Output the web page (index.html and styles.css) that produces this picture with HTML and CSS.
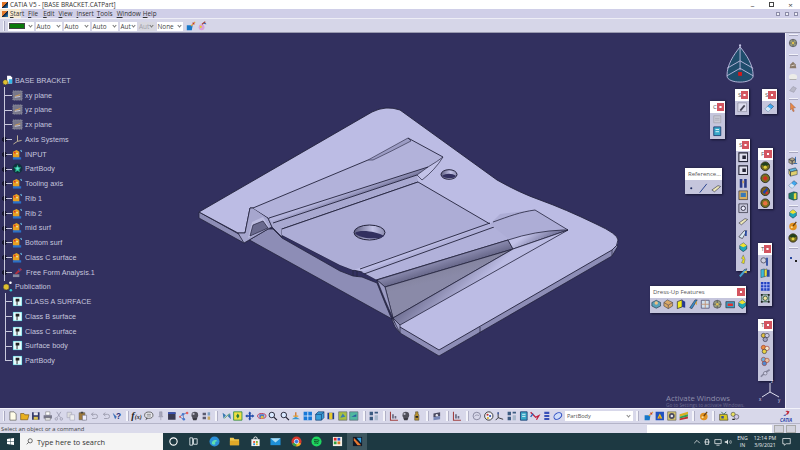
FILE: index.html
```html
<!DOCTYPE html>
<html lang="en">
<head>
<meta charset="utf-8">
<title>CATIA V5 - [BASE BRACKET.CATPart]</title>
<link rel="stylesheet" href="styles.css">
</head>
<body>
<svg class="sprites" aria-hidden="true">
<defs>
<linearGradient id="gOuter" x1="393" y1="318" x2="420" y2="345" gradientUnits="userSpaceOnUse"><stop offset="0" stop-color="#6f6f92"/><stop offset="1" stop-color="#bcbce4"/></linearGradient>
<linearGradient id="gFace" x1="440" y1="250" x2="447" y2="278" gradientUnits="userSpaceOnUse"><stop offset="0" stop-color="#5f5f82"/><stop offset=".6" stop-color="#84849f"/><stop offset="1" stop-color="#8a8aa8"/></linearGradient>
<linearGradient id="gMid" x1="440" y1="248" x2="446" y2="268" gradientUnits="userSpaceOnUse"><stop offset="0" stop-color="#b6b6de"/><stop offset="1" stop-color="#6a6a8c"/></linearGradient>
<linearGradient id="gTip" x1="530" y1="232" x2="540" y2="246" gradientUnits="userSpaceOnUse"><stop offset="0" stop-color="#c2c2e8"/><stop offset="1" stop-color="#73739a"/></linearGradient>
<linearGradient id="gChan" x1="340" y1="195" x2="343" y2="203" gradientUnits="userSpaceOnUse"><stop offset="0" stop-color="#b4b4dc"/><stop offset="1" stop-color="#6e6e94"/></linearGradient>
<linearGradient id="gHole" x1="0" y1="0" x2="1" y2="0"><stop offset="0" stop-color="#5e5e80"/><stop offset=".6" stop-color="#c2c2e6"/><stop offset="1" stop-color="#8c8cb0"/></linearGradient>
<symbol id="doc" viewBox="0 0 12 12"><path d="M2.500 1h5l2.500 2.500V11h-7.500z" fill="#fffde8" stroke="#555" stroke-width=".8"/></symbol>
<symbol id="folder" viewBox="0 0 12 12"><path d="M1 3h4l1 1.500h5l-1.500 6H1z" fill="#e8b020" stroke="#6a4a10" stroke-width=".7"/></symbol>
<symbol id="save" viewBox="0 0 12 12"><path d="M1.500 1.500h9v9h-9z" fill="#2f3566"/><path d="M3.500 1.500h5v3.500h-5z" fill="#e8e8f0"/><path d="M3.500 7h5v3.500h-5z" fill="#d8c050"/></symbol>
<symbol id="print" viewBox="0 0 12 12"><path d="M3.500 1h5v4h-5z" fill="#fff" stroke="#666" stroke-width=".6"/><path d="M1 5h10v4H1z" fill="#77778a"/><path d="M3 8h6v3H3z" fill="#e8e8e8" stroke="#555" stroke-width=".5"/></symbol>
<symbol id="cut" viewBox="0 0 12 12"><path d="M3.500 1L8 8M8.500 1L4 8" stroke="#9a9ab0" fill="none"/><circle cx="3" cy="9.500" r="1.500" fill="none" stroke="#9a9ab0"/><circle cx="9" cy="9.500" r="1.500" fill="none" stroke="#9a9ab0"/></symbol>
<symbol id="copy" viewBox="0 0 12 12"><path d="M1.500 1.500h5.500v6.500h-5.500z" fill="#ddd" stroke="#a2a2b6" stroke-width=".7"/><path d="M5 4.500h5.500v6.500h-5.500z" fill="#eee" stroke="#a2a2b6" stroke-width=".7"/></symbol>
<symbol id="paste" viewBox="0 0 12 12"><path d="M1.500 2h7v8.500h-7z" fill="#a07a3a" stroke="#555" stroke-width=".6"/><path d="M3.500 1h3v2h-3z" fill="#444"/><path d="M5.500 5h5v6h-5z" fill="#eef" stroke="#556" stroke-width=".6"/></symbol>
<symbol id="undo" viewBox="0 0 12 12"><path d="M3 4h5a2.500 2.500 0 010 5H4M3 4l2.500-2M3 4l2.500 2" stroke="#a2a2b4" fill="none" stroke-width="1.200"/></symbol>
<symbol id="help" viewBox="0 0 12 12"><path d="M1 2l3 8 2-3" fill="#3f70b8"/><text x="5" y="9.500" font-size="10" font-weight="700" font-family="Liberation Sans" fill="#27307a">?</text></symbol>
<symbol id="bubble" viewBox="0 0 12 12"><ellipse cx="6" cy="5" rx="5" ry="3.800" fill="#e8e8ee" stroke="#444" stroke-width=".9"/><path d="M3 8l-1 3 3-2" fill="#555"/><path d="M3.500 4h5M3.500 6h5" stroke="#555" stroke-width=".7"/></symbol>
<symbol id="pin" viewBox="0 0 12 12"><path d="M4.500 1h3v4.500l1 1.500h-5l1-1.500zM6 7v4" fill="#a8a8bc" stroke="#8e8ea2" stroke-width=".6"/></symbol>
<symbol id="bottle" viewBox="0 0 12 12"><path d="M4.500 1h3v2l1 2v6h-5V5l1-2z" fill="#b89030" stroke="#443" stroke-width=".6"/><path d="M4.500 6h3v2h-3z" fill="#222"/></symbol>
<symbol id="dark" viewBox="0 0 12 12"><path d="M1.500 1.500h9v9h-9z" fill="#3a3a52"/><path d="M1.500 1.500h9v2h-9z" fill="#3850b0"/></symbol>
<symbol id="tree" viewBox="0 0 12 12"><path d="M1 7l4-3 5-2M5 4l1 6M1 7l5 3" stroke="#5878b8" fill="none"/><circle cx="10" cy="2.500" r="1.500" fill="#e06060"/><circle cx="5" cy="4" r="1.500" fill="#4878d0"/><circle cx="1.500" cy="7" r="1.200" fill="#e06060"/><circle cx="6" cy="10" r="1.500" fill="#4878d0"/></symbol>
<symbol id="blob" viewBox="0 0 12 12"><circle cx="6" cy="5" r="4" fill="#50505c"/><circle cx="4.500" cy="3.500" r="1.300" fill="#b8b8c8"/><path d="M3 8.500h6L8 11H4z" fill="#3a3a44"/></symbol>
<symbol id="split" viewBox="0 0 12 12"><path d="M1 2h4v3H1zM1 7h4v3H1z" fill="#5a5a70"/><path d="M7 1.500h3v4H7z" fill="#7ea0c0"/><path d="M7 6.500h3v4H7z" fill="#c8a860"/></symbol>
<symbol id="fly" viewBox="0 0 12 12"><path d="M1 2l4 3-3 4zM11 10L7 6l3-3z" fill="#3a7ab0"/><path d="M3 9l6-6" stroke="#48a050"/></symbol>
<symbol id="fit" viewBox="0 0 12 12"><path d="M1 1h10v10H1z" fill="#f0e040" stroke="#2a8a4a"/><path d="M6 3l-2 3 2 3 2-3z" fill="#2a7a3a"/></symbol>
<symbol id="pan" viewBox="0 0 12 12"><path d="M6 .5l2 2.500H7v2h2V4l2.500 2L9 8V7H7v2h1l-2 2.500L4 9h1V7H3v1L.5 6 3 4v1h2V3H4z" fill="#1f4aa8"/></symbol>
<symbol id="rot" viewBox="0 0 12 12"><ellipse cx="6" cy="6" rx="5" ry="3" fill="none" stroke="#c04060" stroke-width="1.200"/><path d="M3 4h6v4H3z" fill="#5078c0"/><path d="M5 6h3v3H5z" fill="#e0c040"/></symbol>
<symbol id="zoomp" viewBox="0 0 12 12"><circle cx="4.800" cy="4.800" r="3.300" fill="#d8e8ff" stroke="#223" stroke-width="1.100"/><path d="M7.300 7.300l3.700 3.700" stroke="#223" stroke-width="1.500"/></symbol>
<symbol id="normal" viewBox="0 0 12 12"><path d="M1 10l5-3 5 3z" fill="#3898d0"/><path d="M6 7V1.500" stroke="#d07020" stroke-width="1.500"/><path d="M3 6h6" stroke="#e0a030" stroke-width="1.500"/></symbol>
<symbol id="quad" viewBox="0 0 12 12"><path d="M1 1h10v10H1z" fill="#1878d8"/><path d="M6 1v10M1 6h10" stroke="#e8f0ff" stroke-width="1"/></symbol>
<symbol id="cube" viewBox="0 0 12 12"><path d="M1 4l3-3h7v7l-3 3H1z" fill="#3aa0d8" stroke="#163a70" stroke-width=".8"/><path d="M1 4h7v7M8 4l3-3" stroke="#163a70" fill="none" stroke-width=".8"/></symbol>
<symbol id="can" viewBox="0 0 12 12"><path d="M2 2h8v8H2z" fill="#1f3a90"/><path d="M4 2h4v8H4z" fill="#e8c830"/></symbol>
<symbol id="persp" viewBox="0 0 12 12"><path d="M1 1h10v10H1z" fill="#a8c040" stroke="#667" stroke-width=".8"/><path d="M3 8l3-5 3 4z" fill="#3a7ab0"/></symbol>
<symbol id="screen" viewBox="0 0 12 12"><path d="M1 1h10v10H1z" fill="#50b8a0" stroke="#667" stroke-width=".8"/><path d="M3 7l6-3v3z" fill="#2a5aa0"/></symbol>
<symbol id="book" viewBox="0 0 12 12"><path d="M2 3l8-1.500V6L2 7.500z" fill="#4a4a60"/><path d="M2 7.500l8-1.500v4l-8 1z" fill="#7888b8"/><circle cx="6" cy="5" r="1.400" fill="#e8e8f0"/></symbol>
<symbol id="scale" viewBox="0 0 12 12"><path d="M2 1v10h9" fill="none" stroke="#a04040" stroke-width="1.300"/><path d="M4 4h2v5H4zM7 6h2v3H7z" fill="#6a6a80"/></symbol>
<symbol id="swirl" viewBox="0 0 12 12"><circle cx="6" cy="6" r="4.500" fill="none" stroke="#8c8ca4" stroke-width="1.200"/><path d="M3.500 6.500c1-2 3-2 5-1" stroke="#8c8ca4" fill="none"/></symbol>
<symbol id="ball" viewBox="0 0 12 12"><circle cx="6" cy="6" r="5" fill="#f0f0f4" stroke="#333" stroke-width="1.100"/><circle cx="4.500" cy="4.500" r="1.300" fill="#c03030"/><circle cx="7.500" cy="6" r="1.300" fill="#2a50b0"/><circle cx="5" cy="8.300" r="1.200" fill="#d8b020"/></symbol>
<symbol id="axis" viewBox="0 0 12 12"><path d="M4 1.500V8l6 2M4 8l-3 3" stroke="#222" fill="none"/><path d="M4 1.500V4" stroke="#2a50b0" stroke-width="1.200"/></symbol>
<symbol id="axistree" viewBox="0 0 12 12"><path d="M6 1.500V8L10.500 7M6 8L1.500 11" stroke="#d8c8a0" fill="none" stroke-width=".9"/></symbol>
<symbol id="bars" viewBox="0 0 12 12"><path d="M1 1h4v4H1zM7 1h4v2H7zM1 7h4v4H1z" fill="#3a5a80"/><path d="M7 5h4v6H7z" fill="#a8b8cc"/></symbol>
<symbol id="block" viewBox="0 0 12 12"><path d="M2 1h8v10H2z" fill="#38a8c8" stroke="#1a3a70"/><path d="M4 4h4M4 6.500h4" stroke="#e8f8ff"/></symbol>
<symbol id="redx" viewBox="0 0 12 12"><path d="M1 1.500l6 6 4-2-3 5" stroke="#c02040" fill="none" stroke-width="1.500"/><path d="M1 7l3-4" stroke="#2060b8" stroke-width="1.500"/></symbol>
<symbol id="stack" viewBox="0 0 12 12"><path d="M3 1h6v2.500H3zM3 4.700h6v2.500H3zM3 8.400h6v2.500H3z" fill="#3850b8"/></symbol>
<symbol id="link" viewBox="0 0 12 12"><ellipse cx="6" cy="6" rx="5" ry="3.500" transform="rotate(-35 6 6)" fill="#cfdcf8" stroke="#2848c0" stroke-width="1.100"/></symbol>
<symbol id="brush" viewBox="0 0 12 12"><path d="M1 5h7l-1 6H1z" fill="#1878c8"/><path d="M6 6l5-5" stroke="#e0a040" stroke-width="1.400"/><path d="M8 2l2 2" stroke="#c03030" stroke-width="1.400"/></symbol>
<symbol id="pot" viewBox="0 0 12 12"><circle cx="5.500" cy="7.500" r="3.500" fill="#d8a0d8"/><circle cx="4.500" cy="7" r="1.300" fill="#e8d020"/><path d="M6 4l4-3" stroke="#b04030" stroke-width="1.500"/><path d="M8 2.500l3 1" stroke="#2860b0" stroke-width="1.200"/></symbol>
<symbol id="rainbow" viewBox="0 0 12 12"><path d="M1 1h10v10H1z" fill="#2050c0"/><path d="M3 9l3-6 3 6z" fill="#e8c820"/><path d="M5 9l1-3 1 3z" fill="#d03040"/></symbol>
<symbol id="wheel" viewBox="0 0 12 12"><path d="M1 1h10v10H1z" fill="#d8c870" stroke="#555" stroke-width=".7"/><circle cx="6" cy="6" r="3.500" fill="#4a4a60"/><circle cx="6" cy="6" r="1.500" fill="#e8e8f0"/></symbol>
<symbol id="layers" viewBox="0 0 12 12"><path d="M1 4l10-3v3L1 7z" fill="#d8b020"/><path d="M1 7l10-3v2.500L1 9z" fill="#30a050"/><path d="M1 9l10-2.500V9L1 11z" fill="#c03030"/></symbol>
<symbol id="apple" viewBox="0 0 12 12"><circle cx="6" cy="6.500" r="4.500" fill="#e09020"/><path d="M6 6L10 1" stroke="#6a4010" stroke-width="1.500"/><circle cx="4.500" cy="7.500" r="1.300" fill="#f8e0a0"/></symbol>
<symbol id="yel1" viewBox="0 0 12 12"><path d="M1 4h9l1 7H1z" fill="#d8c820" stroke="#333" stroke-width=".7"/><path d="M3 6h3v3H3z" fill="#385098"/><path d="M3 1l3 3 3-3" stroke="#2a6a4a" fill="none"/></symbol>
<symbol id="yel2" viewBox="0 0 12 12"><circle cx="4" cy="4" r="2.500" fill="#e8e060" stroke="#444" stroke-width=".7"/><circle cx="8" cy="7" r="2.800" fill="#d0c8e8" stroke="#444" stroke-width=".7"/><path d="M3 10h3" stroke="#222" stroke-width="1.500"/></symbol>
<symbol id="feat" viewBox="0 0 12 12"><path d="M1 4l4-3 6 3v4l-5 3-5-3z" fill="#d8a868" stroke="#333" stroke-width=".6"/><path d="M1 4l5 3 5-3M6 7v4" stroke="#335" fill="none" stroke-width=".6"/></symbol>
<symbol id="edge" viewBox="0 0 12 12"><path d="M1 4l5-2.500L11 4v4l-5 2.500L1 8z" fill="#58a0b8" stroke="#234" stroke-width=".7"/><circle cx="6" cy="4.500" r="2" fill="#f0c080"/></symbol>
<symbol id="shell" viewBox="0 0 12 12"><path d="M1.500 3L7 1v8l-5.500 2z" fill="#f0e820" stroke="#223" stroke-width=".8"/><path d="M7 1l3.500 2v7L7 9z" fill="#283890"/></symbol>
<symbol id="slant" viewBox="0 0 12 12"><path d="M2 10L8 1h2.500l-6 10z" fill="#3a8cc8" stroke="#223" stroke-width=".6"/><path d="M8 5l2-3v5z" fill="#d8a030"/></symbol>
<symbol id="win" viewBox="0 0 12 12"><path d="M1.500 1.500h9v9h-9z" fill="#cfe0ee" stroke="#446" stroke-width=".8"/><path d="M1.500 6h9M6 1.500v9" stroke="#c09070"/></symbol>
<symbol id="gear" viewBox="0 0 12 12"><circle cx="6" cy="6" r="4.500" fill="#9aa080" stroke="#445" stroke-width=".7"/><path d="M1.500 6h9M6 1.500v9" stroke="#445" stroke-width=".8"/><circle cx="6" cy="6" r="1.500" fill="#e0c050"/></symbol>
<symbol id="tray" viewBox="0 0 12 12"><path d="M1 3h10v7H1z" fill="#3a9ec0" stroke="#223" stroke-width=".7"/><path d="M3 5h6v3H3z" fill="#e03030"/></symbol>
<symbol id="arc" viewBox="0 0 12 12"><path d="M2 10h8l-1-5-3-3-3 3z" fill="#8a7a6a"/><path d="M4 7l4-1" stroke="#e8e0d8"/></symbol>
<symbol id="cloud" viewBox="0 0 12 12"><ellipse cx="6" cy="6" rx="5" ry="3.500" fill="#ecece8"/><path d="M2 9h8" stroke="#a4a4a4"/></symbol>
<symbol id="grey" viewBox="0 0 12 12"><path d="M2 8l4-5 4 2-3 5z" fill="#b8b8c8" stroke="#9a9aa8" stroke-width=".7"/></symbol>
<symbol id="greybox" viewBox="0 0 12 12"><path d="M2 2h8v8H2z" fill="#c8c8d4" stroke="#a0a0ac" stroke-width=".8"/><path d="M3.500 5h5M3.500 7h5" stroke="#a0a0ac" stroke-width=".7"/></symbol>
<symbol id="cursor" viewBox="0 0 12 12"><path d="M3 1l6 6H6l1.500 4-1.500.500L4.500 8 3 9.500z" fill="#e8884a" stroke="#804020" stroke-width=".4"/></symbol>
<symbol id="tool" viewBox="0 0 12 12"><path d="M1 4l4-2 4 2-4 2zM1 4v4l4 2V6zM9 4v4l-4 2V6z" fill="#b0a888" stroke="#334" stroke-width=".6"/><path d="M9 1v6M7 9h4" stroke="#2060a8"/></symbol>
<symbol id="drum" viewBox="0 0 12 12"><path d="M1 3l8-2 2 3-8 2z" fill="#5ab0d8" stroke="#234" stroke-width=".6"/><path d="M1 3v5l2 3V6zM3 6l8-2v5l-8 2z" fill="#e0d070" stroke="#234" stroke-width=".6"/></symbol>
<symbol id="erase" viewBox="0 0 12 12"><path d="M1 8l6-6 4 3-6 6z" fill="#40a8f0" stroke="#234" stroke-width=".5"/><path d="M1 8l3-3 4 3-3 3z" fill="#d8e8f8"/></symbol>
<symbol id="green" viewBox="0 0 12 12"><path d="M1 3l6-2 4 1v8l-4 1-6-2z" fill="#208068" stroke="#123" stroke-width=".6"/><path d="M7 3l3-.500v7l-3 .500z" fill="#e8d840"/></symbol>
<symbol id="pencil" viewBox="0 0 12 12"><path d="M1 1h10v10H1z" fill="#dde" stroke="#778" stroke-width=".6"/><path d="M3 9l5-6 1.500 1.500-5 6z" fill="#445"/></symbol>
<symbol id="face" viewBox="0 0 12 12"><path d="M1 1h10v10H1z" fill="#e0e0ee" stroke="#223" stroke-width="1.200"/><path d="M5 4h4v4H5z" fill="#223"/></symbol>
<symbol id="tall" viewBox="0 0 12 12"><path d="M2 1h3v10H2zM7 1h3v10H7z" fill="#2a3a88"/><path d="M5 3h2v3H5z" fill="#c8a060"/></symbol>
<symbol id="pic" viewBox="0 0 12 12"><path d="M1 1h10v10H1z" fill="#d8b060" stroke="#334" stroke-width=".8"/><path d="M3 3h6v5H3z" fill="#3878b8"/></symbol>
<symbol id="gem" viewBox="0 0 12 12"><path d="M1 1h10v10H1z" fill="#c8c8dc" stroke="#223" stroke-width=".8"/><circle cx="6" cy="6" r="2.500" fill="#eef" stroke="#223"/></symbol>
<symbol id="wedge" viewBox="0 0 12 12"><path d="M1 8l7-5 3 1-7 6z" fill="#eee8b8" stroke="#334" stroke-width=".7"/></symbol>
<symbol id="wedge2" viewBox="0 0 12 12"><path d="M1 9l6-7h3L5 11z" fill="#d8e8f0" stroke="#334" stroke-width=".8"/><path d="M8 2v6h2V2z" fill="#2848a0"/></symbol>
<symbol id="cubey" viewBox="0 0 12 12"><path d="M2 4l4-3 4 3v4l-4 3-4-3z" fill="#20a8b8" stroke="#123" stroke-width=".6"/><path d="M6 1l4 3-4 2-4-2z" fill="#f0e030"/></symbol>
<symbol id="spark" viewBox="0 0 12 12"><path d="M6 1l2 5-1 5-3-1 2-4-2-1z" fill="#e8e020" stroke="#556" stroke-width=".5"/></symbol>
<symbol id="bluey" viewBox="0 0 12 12"><path d="M1 10l6-7 3-1-1 3-6 7z" fill="#40a0d8" stroke="#334" stroke-width=".6"/><path d="M6 6l4-2v3z" fill="#e8d040"/></symbol>
<symbol id="disc" viewBox="0 0 12 12"><path d="M1 6a5 5 0 1110 0 5 5 0 11-10 0z" fill="#787020" stroke="#111" stroke-width=".8"/><path d="M1 4l5-3 5 3-5 2z" fill="#204020"/><circle cx="6" cy="7" r="1.800" fill="#e0d040"/></symbol>
<symbol id="discr" viewBox="0 0 12 12"><path d="M1 6a5 5 0 1110 0 5 5 0 11-10 0z" fill="#787020" stroke="#111" stroke-width=".8"/><path d="M3 6l3-3 3 3-3 3z" fill="#d03020"/></symbol>
<symbol id="discb" viewBox="0 0 12 12"><path d="M1 6a5 5 0 1110 0 5 5 0 11-10 0z" fill="#786020" stroke="#111" stroke-width=".8"/><path d="M3 7l5-5 1 2-4 5z" fill="#2040b0"/><circle cx="8" cy="8" r="1.500" fill="#d03030"/></symbol>
<symbol id="disco" viewBox="0 0 12 12"><path d="M1 6a5 5 0 1110 0 5 5 0 11-10 0z" fill="#787020" stroke="#111" stroke-width=".8"/><circle cx="6" cy="6" r="2.500" fill="#e87040"/></symbol>
<symbol id="sk1" viewBox="0 0 12 12"><circle cx="4" cy="5" r="3" fill="#d0d0e0" stroke="#556"/><path d="M8 2v9" stroke="#2848a0" stroke-width="2"/></symbol>
<symbol id="sk2" viewBox="0 0 12 12"><path d="M1 2l4-1v9l-4 1z" fill="#40b8d8" stroke="#234" stroke-width=".5"/><path d="M5 2l3-1v8l-3 1z" fill="#e8e040" stroke="#234" stroke-width=".5"/><path d="M8 2h3v8H8z" fill="#2848a0"/></symbol>
<symbol id="sk3" viewBox="0 0 12 12"><path d="M1 1h10v10H1z" fill="#2040c0"/><path d="M4.300 1v10M7.700 1v10M1 4.300h10M1 7.700h10" stroke="#c8d0ff" stroke-width=".8"/></symbol>
<symbol id="sk4" viewBox="0 0 12 12"><path d="M2 2h8v8H2z" fill="none" stroke="#2a5a3a"/><circle cx="6" cy="6" r="2.500" fill="#f0e0a0" stroke="#2a5a3a"/><path d="M1 1h2v2H1zM9 1h2v2H9zM1 9h2v2H1zM9 9h2v2H9z" fill="#222"/></symbol>
<symbol id="mol" viewBox="0 0 12 12"><circle cx="4" cy="4" r="2.500" fill="#e0c040" stroke="#334" stroke-width=".7"/><circle cx="8" cy="4" r="2.500" fill="#c8c8e0" stroke="#334" stroke-width=".7"/><circle cx="6" cy="8.500" r="2.500" fill="#a0a0c0" stroke="#334" stroke-width=".7"/></symbol>
<symbol id="molo" viewBox="0 0 12 12"><circle cx="4" cy="4" r="2.500" fill="#e89040" stroke="#a03020" stroke-width=".7"/><circle cx="8" cy="5" r="2.500" fill="#f0e8d0" stroke="#a03020" stroke-width=".7"/><circle cx="5" cy="8.500" r="2.500" fill="#e8d040" stroke="#334" stroke-width=".7"/></symbol>
<symbol id="molb" viewBox="0 0 12 12"><circle cx="4" cy="4" r="2.500" fill="#70b0e0" stroke="#a04030" stroke-width=".7"/><circle cx="8" cy="5" r="2.500" fill="#e8c0a0" stroke="#a04030" stroke-width=".7"/><circle cx="5" cy="8.500" r="2.500" fill="#5088d0" stroke="#a04030" stroke-width=".7"/></symbol>
<symbol id="molg" viewBox="0 0 12 12"><path d="M1 10l5-5 5-3" stroke="#8888a0" stroke-width="2" fill="none"/><circle cx="6" cy="6" r="2" fill="#d0d0e8" stroke="#556" stroke-width=".6"/></symbol>
<symbol id="plane" viewBox="0 0 12 12"><path d="M1 1h10v10H1z" fill="#77778a"/><path d="M1 1h10v10H1z" fill="none" stroke="#9a9aaa" stroke-dasharray="1 1"/><path d="M3 7l6-2" stroke="#d8a050"/><path d="M3 8l6-1" stroke="#d0d0e0"/></symbol>
<symbol id="geoset" viewBox="0 0 12 12"><path d="M1 3l4-2 3 2v7l-3 1-4-2z" fill="#e8a020"/><circle cx="3" cy="4" r="1" fill="#e03030"/><circle cx="5.500" cy="5" r="1" fill="#f0e0a0"/><path d="M1 9h9v2.500H1z" fill="#2a70c8"/><path d="M9.500 1L10.500 3" stroke="#70c8f0" stroke-width="1.200"/></symbol>
<symbol id="body" viewBox="0 0 12 12"><circle cx="6" cy="6" r="5.500" fill="#123040"/><path d="M6 2l1.200 2.500L10 5 8 7l.5 3L6 8.500 3.500 10 4 7 2 5l2.800-.5z" fill="#28c090"/><circle cx="6" cy="6" r="1.300" fill="#70e0e0"/></symbol>
<symbol id="ffa" viewBox="0 0 12 12"><path d="M1 8h7v3H1z" fill="#8888a0"/><path d="M3 7l6-6 2 2-6 5z" fill="#b03040"/><path d="M7 2l2 2" stroke="#2050c0" stroke-width="1.500"/></symbol>
<symbol id="pub" viewBox="0 0 12 12"><path d="M1 1h10v10H1z" fill="#30c8d8"/><path d="M1.500 1.500h9v9h-9z" fill="#e8fcfc"/><path d="M4 3h4v3H6v4H5V6H4z" fill="#222"/></symbol>
<symbol id="rootp" viewBox="0 0 13 13"><path d="M6 1h4l2 2v7H6z" fill="#fff"/><path d="M8 5h4v5H8z" fill="#30b8e8"/><circle cx="4" cy="8.500" r="3" fill="#e0c030" stroke="#333" stroke-dasharray="1.500 1"/></symbol>
<symbol id="pubroot" viewBox="0 0 13 13"><circle cx="5" cy="7" r="3.500" fill="#e0c030" stroke="#333" stroke-dasharray="1.500 1"/><circle cx="10" cy="2" r="1.500" fill="#fff"/><circle cx="10.500" cy="11" r="1.500" fill="#30c8d8"/></symbol>
<symbol id="catlogo" viewBox="0 0 24 14"><path d="M14 1l-3 .500 3 2-3 3.500 4-1 2-4z" fill="#c02838"/><path d="M8 8l3-2 1 2z" fill="#2840a8"/></symbol>
</defs>
</svg>

<div class="app">
  <header class="titlebar">
    <span class="app-ico"></span>
    <span class="title">CATIA V5 - [BASE BRACKET.CATPart]</span>
    <span class="winbtns"><span class="wb">&#8211;</span><span class="wb wb-max"></span><span class="wb">&#215;</span></span>
  </header>
  <nav class="menubar">
    <span class="m-start"><span class="app-ico"></span><span><u>S</u>tart</span></span>
    <span class="m m-file"><u>F</u>ile</span>
    <span class="m m-edit"><u>E</u>dit</span>
    <span class="m m-view"><u>V</u>iew</span>
    <span class="m m-ins"><u>I</u>nsert</span>
    <span class="m m-tools"><u>T</u>ools</span>
    <span class="m m-win"><u>W</u>indow</span>
    <span class="m m-help"><u>H</u>elp</span>
    <span class="docbtns"><i></i><i></i><i></i></span>
  </nav>
  <div class="propbar">
    <span class="grip"></span>
    <span class="combo c-col"><b class="swatch"></b><em></em></span>
    <span class="combo c-a">Auto<em></em></span>
    <span class="combo c-a">Auto<em></em></span>
    <span class="combo c-a">Auto<em></em></span>
    <span class="combo c-b">Aut<em></em></span>
    <span class="combo c-b off">Aut<em></em></span>
    <span class="combo c-a">None<em></em></span>
    <svg class="pi pi-first"><use href="#brush"/></svg>
    <svg class="pi"><use href="#pot"/></svg>
  </div>

  <div class="workspace">
    <main class="viewport">
      <svg class="part" viewBox="0 33 785 375" aria-label="3D part">
        <path d="M199 212V218L244 243L268 229L273 229L282 238L340 271L353 276L362 277L377 283L385 303L395 327L400 333L439 356L612 256L618 246L600 240L439 345Z" fill="#8d8db6" stroke="#23233c" stroke-width=".8" stroke-linejoin="round"/>
        <path d="M199 212L372 112Q386 105 400 110L497 180Q520 193 540 200Q565 209 596 224Q618 234 618 240Q618 246 612 250L439 350L400 327L395 323L385 300L377 280L362 272L353 270L340 265L282 235L275 230L272 227L268 218L253 208L250 208L245 233L238 233Z" fill="#bcbce4" stroke="#23233c" stroke-width=".9" stroke-linejoin="round"/>
        <path d="M250 208L253 208L268 218L272 227L268 229L244 243L238 233L245 233Z" fill="#a6a6ce" stroke="#23233c" stroke-width=".8" stroke-linejoin="round"/>
        <path d="M248 238L252 222L263 217L269 227Z" fill="#bcbce0"/>
        <path d="M250 236L253 225L263 221L268 228Z" fill="#6a6a8e" stroke="#23233c" stroke-width=".7"/>
        <path d="M268 218L273 219L282 229L282 237L273 228L272 227Z" fill="#a8a8d0" stroke="#23233c" stroke-width=".7"/>
        <path d="M253 208L368 160L408 138L443 157Q438 161 428 167L269 218Z" fill="#b2b2da"/>
        <path d="M269 218L428 167L417 175L273 223Z" fill="url(#gChan)"/>
        <path d="M273 223L417 175L418 182L282 229Z" fill="#a8a8d0"/>
        <path d="M368 160L408 138L411 141Q390 152 373 160Z" fill="#9c9cc4" stroke="#23233c" stroke-width=".6"/>
        <path d="M428 167Q438 161 443 157Q435 170 422 180L417 175Z" fill="#c2c2e8" stroke="#23233c" stroke-width=".7"/>
        <path d="M253 208L368 160M408 138L443 157M269 218L428 167M273 223L417 175M282 229L418 182" fill="none" stroke="#22223c" stroke-width=".9"/>
        <path d="M282 229L418 182L490 224L353 270L340 265L282 235Z" fill="#adadd6"/>
        <path d="M282 229L418 182L490 224" fill="none" stroke="#23233c" stroke-width=".9"/>
        <path d="M362 272L490 224L535 210L568 230L400 325L393 318L385 287L377 280Z" fill="#b1b1da"/>
        <path d="M360 269L490 223M364 274L494 227M376 280L508 240" fill="none" stroke="#23233c" stroke-width=".9"/>
        <path d="M490 224L500 214L535 210L568 230L510 240Z" fill="#adadd6"/>
        <path d="M493 222C510 216 520 212 535 210L568 230" fill="none" stroke="#23233c" stroke-width=".8"/>
        <path d="M377 280L508 240L513 249L385 287Z" fill="url(#gMid)" stroke="#23233c" stroke-width=".8"/>
        <path d="M385 287L513 249L393 318Z" fill="url(#gFace)" stroke="#23233c" stroke-width=".8"/>
        <path d="M508 240Q535 231 563 230L568 230L513 249Z" fill="url(#gTip)" stroke="#23233c" stroke-width=".8"/>
        <path d="M393 318L513 249L568 230L400 325Z" fill="url(#gOuter)" stroke="#23233c" stroke-width=".8"/>
        <path d="M377 280L385 287L393 318L400 325L400 333L395 323L385 300Z" fill="#9c9cc4" stroke="#23233c" stroke-width=".7"/>
        <path d="M353 270V276M357 271V277M480 327V333M612 250V256" stroke="#23233c" stroke-width=".7"/>
        <ellipse cx="369.500" cy="232.500" rx="15.500" ry="7.500" fill="url(#gHole)" stroke="#23233c"/>
        <path d="M355 233C358 238 378 241 384 236C378 232 360 229 355 233Z" fill="#32305f"/>
        <ellipse cx="449" cy="174.500" rx="8" ry="4.800" fill="url(#gHole)" stroke="#23233c"/>
        <path d="M442 176C446 179 454 179 456 176C452 173 446 173 442 176Z" fill="#32305f"/>
      </svg>

      <ul class="tree">
        <li class="row root"><svg class="ti"><use href="#rootp"/></svg>BASE BRACKET</li>
        <li class="row leaf"><svg class="ti"><use href="#plane"/></svg>xy plane</li>
        <li class="row leaf"><svg class="ti"><use href="#plane"/></svg>yz plane</li>
        <li class="row leaf"><svg class="ti"><use href="#plane"/></svg>zx plane</li>
        <li class="row node"><svg class="ti"><use href="#axistree"/></svg>Axis Systems</li>
        <li class="row node"><svg class="ti"><use href="#geoset"/></svg>INPUT</li>
        <li class="row node"><svg class="ti"><use href="#body"/></svg>PartBody</li>
        <li class="row node"><svg class="ti"><use href="#geoset"/></svg>Tooling axis</li>
        <li class="row node"><svg class="ti"><use href="#geoset"/></svg>Rib 1</li>
        <li class="row node"><svg class="ti"><use href="#geoset"/></svg>Rib 2</li>
        <li class="row node"><svg class="ti"><use href="#geoset"/></svg>mid surf</li>
        <li class="row node"><svg class="ti"><use href="#geoset"/></svg>Bottom surf</li>
        <li class="row node"><svg class="ti"><use href="#geoset"/></svg>Class C surface</li>
        <li class="row node wide"><svg class="ti"><use href="#ffa"/></svg>Free Form Analysis.1</li>
        <li class="row root"><svg class="ti"><use href="#pubroot"/></svg>Publication</li>
        <li class="row leaf sub"><svg class="ti"><use href="#pub"/></svg>CLASS A SURFACE</li>
        <li class="row leaf sub"><svg class="ti"><use href="#pub"/></svg>Class B surface</li>
        <li class="row leaf sub"><svg class="ti"><use href="#pub"/></svg>Class C surface</li>
        <li class="row leaf sub"><svg class="ti"><use href="#pub"/></svg>Surface body</li>
        <li class="row leaf sub"><svg class="ti"><use href="#pub"/></svg>PartBody</li>
      </ul>

      <svg class="compass" viewBox="0 0 32 46" aria-label="compass">
        <path d="M15 1V7" stroke="#c0c0e0" stroke-width="1"/>
        <circle cx="15" cy="1.500" r="1.200" fill="#c0c0e0"/>
        <path d="M15 3C8 12 1 22 1 34C1 43 29 43 29 34C29 22 22 12 15 3Z" fill="#1f4d6c" stroke="#b8b8dc" stroke-width="1"/>
        <path d="M15 3V28M1 26L15 18L29 26M1 34L15 26L29 34" fill="none" stroke="#b8b8dc" stroke-width="1"/>
        <path d="M13 30h4v4h-4z" fill="#d81818"/>
      </svg>

      <section class="ft ft-a"><div class="fh"><span>S</span><i></i></div><div class="fb"><svg class="fi"><use href="#pencil"/></svg></div></section>
      <section class="ft ft-b"><div class="fh"><span>S</span><i></i></div><div class="fb"><svg class="fi"><use href="#erase"/></svg></div></section>
      <section class="ft ft-c"><div class="fh"><span>C</span><i></i></div><div class="fb"><svg class="fi"><use href="#greybox"/></svg><svg class="fi"><use href="#block"/></svg></div></section>
      <section class="ft ft-d"><div class="fh"><span>S</span><i></i></div><div class="fb"><svg class="fi"><use href="#face"/></svg><svg class="fi"><use href="#face"/></svg><svg class="fi"><use href="#tall"/></svg><svg class="fi"><use href="#pic"/></svg><svg class="fi"><use href="#gem"/></svg><svg class="fi"><use href="#wedge"/></svg><svg class="fi"><use href="#wedge2"/></svg><svg class="fi"><use href="#cubey"/></svg><svg class="fi"><use href="#spark"/></svg><svg class="fi"><use href="#bluey"/></svg></div></section>
      <section class="ft ft-e"><div class="fh"><span>F</span><i></i></div><div class="fb"><svg class="fi"><use href="#disc"/></svg><svg class="fi"><use href="#discr"/></svg><svg class="fi"><use href="#discb"/></svg><svg class="fi"><use href="#disco"/></svg></div></section>
      <section class="ft ft-g"><div class="fh"><span>T</span><i></i></div><div class="fb"><svg class="fi"><use href="#sk1"/></svg><svg class="fi"><use href="#sk2"/></svg><svg class="fi"><use href="#sk3"/></svg><svg class="fi"><use href="#sk4"/></svg></div></section>
      <section class="ft ft-h"><div class="fh"><span>T</span><i></i></div><div class="fb"><svg class="fi"><use href="#mol"/></svg><svg class="fi"><use href="#molo"/></svg><svg class="fi"><use href="#molb"/></svg><svg class="fi"><use href="#molg"/></svg></div></section>
      <section class="ft ft-ref"><div class="fh"><span>Reference...</span><i></i></div><div class="fb fb-row">
        <svg class="fi" viewBox="0 0 12 12"><circle cx="6" cy="6" r="1.200" fill="#1c2a60"/></svg>
        <svg class="fi" viewBox="0 0 12 12"><path d="M2 11L10 1" stroke="#24408c" stroke-width="1.100"/></svg>
        <svg class="fi"><use href="#wedge"/></svg></div></section>
      <section class="ft ft-dress"><div class="fh"><span>Dress-Up Features</span><i></i></div><div class="fb fb-row">
        <svg class="fi"><use href="#edge"/></svg><svg class="fi"><use href="#feat"/></svg><svg class="fi"><use href="#shell"/></svg><svg class="fi"><use href="#slant"/></svg><svg class="fi"><use href="#win"/></svg><svg class="fi"><use href="#gear"/></svg><svg class="fi"><use href="#tray"/></svg><svg class="fi"><use href="#cubey"/></svg></div></section>

      <svg class="triad" viewBox="0 0 24 24"><path d="M12 4V13L4 18M12 13L21 18" fill="none" stroke="#dcdcec" stroke-width="1"/><text x="13" y="4" font-size="4.500" font-family="Liberation Sans" fill="#dcdcec">z</text><text x="1" y="22" font-size="4.500" font-family="Liberation Sans" fill="#dcdcec">x</text><text x="20" y="23" font-size="4.500" font-family="Liberation Sans" fill="#dcdcec">y</text></svg>
      <div class="activate">Activate Windows</div>
      <div class="activate2">Go to Settings to activate Windows.</div>
    </main>
    <aside class="strip">
      <span class="strip-grip g1"></span>
      <svg class="si si-a"><use href="#gear"/></svg>
      <span class="strip-grip g2"></span>
      <svg class="si si-b"><use href="#arc"/></svg>
      <svg class="si"><use href="#cloud"/></svg>
      <svg class="si"><use href="#grey"/></svg>
      <span class="strip-grip g3"></span>
      <svg class="si si-a"><use href="#cursor"/></svg>
      <span class="strip-grip g4"></span>
      <svg class="si si-c"><use href="#tool"/></svg>
      <svg class="si"><use href="#drum"/></svg>
      <svg class="si"><use href="#erase"/></svg>
      <svg class="si"><use href="#green"/></svg>
      <span class="strip-grip g3"></span>
      <svg class="si si-a"><use href="#cubey"/></svg>
      <svg class="si"><use href="#apple"/></svg>
      <svg class="si"><use href="#disc"/></svg>
      <span class="strip-grip g3"></span>
      <span class="dots"></span>
    </aside>
  </div>

  <div class="mainbar">
    <span class="grip"></span>
    <svg class="bi"><use href="#doc"/></svg><svg class="bi"><use href="#folder"/></svg><svg class="bi"><use href="#save"/></svg><svg class="bi"><use href="#print"/></svg><svg class="bi"><use href="#cut"/></svg><svg class="bi"><use href="#copy"/></svg><svg class="bi"><use href="#paste"/></svg><svg class="bi"><use href="#undo"/></svg><svg class="bi"><use href="#undo"/></svg><svg class="bi"><use href="#help"/></svg>
    <span class="sep"></span>
    <span class="fx">f<small>(x)</small></span><svg class="bi"><use href="#bubble"/></svg><svg class="bi"><use href="#pin"/></svg><svg class="bi"><use href="#dark"/></svg><svg class="bi"><use href="#tree"/></svg><svg class="bi"><use href="#blob"/></svg><svg class="bi"><use href="#split"/></svg>
    <span class="sep"></span>
    <svg class="bi"><use href="#fly"/></svg><svg class="bi"><use href="#fit"/></svg><svg class="bi"><use href="#pan"/></svg><svg class="bi"><use href="#rot"/></svg><svg class="bi"><use href="#zoomp"/></svg><svg class="bi"><use href="#zoomp"/></svg><svg class="bi"><use href="#normal"/></svg><svg class="bi"><use href="#quad"/></svg><svg class="bi"><use href="#cube"/></svg><svg class="bi"><use href="#can"/></svg><svg class="bi"><use href="#persp"/></svg><svg class="bi"><use href="#screen"/></svg>
    <span class="sep"></span>
    <svg class="bi"><use href="#bars"/></svg>
    <span class="sep s2"></span>
    <svg class="bi"><use href="#scale"/></svg><svg class="bi"><use href="#blob"/></svg><svg class="bi"><use href="#bottle"/></svg>
    <span class="sep s3"></span>
    <svg class="bi"><use href="#book"/></svg>
    <span class="sep s3"></span>
    <svg class="bi"><use href="#scale"/></svg>
    <span class="sep s3"></span>
    <svg class="bi"><use href="#swirl"/></svg><svg class="bi"><use href="#ball"/></svg><svg class="bi"><use href="#axis"/></svg><svg class="bi"><use href="#bars"/></svg><svg class="bi"><use href="#block"/></svg><svg class="bi"><use href="#redx"/></svg><svg class="bi"><use href="#stack"/></svg><svg class="bi"><use href="#link"/></svg>
    <span class="bodycombo">PartBody<em></em></span>
    <span class="sep s4"></span>
    <svg class="bi"><use href="#brush"/></svg><svg class="bi"><use href="#rainbow"/></svg><svg class="bi"><use href="#wheel"/></svg><svg class="bi"><use href="#layers"/></svg>
    <span class="sep s5"></span>
    <svg class="bi"><use href="#apple"/></svg>
    <span class="sep s5"></span>
    <svg class="bi"><use href="#yel1"/></svg><svg class="bi"><use href="#yel2"/></svg>
    <span class="catia"><svg class="catlogo"><use href="#catlogo"/></svg><b>CATIA</b></span>
  </div>

  <div class="statusbar">
    <span class="msg">Select an object or a command</span>
    <span class="cmd"></span>
    <span class="stbtn"></span>
    <span class="stbtn"></span>
  </div>

  <footer class="taskbar">
    <span class="start"><svg class="winlogo" viewBox="0 0 10 10"><path d="M0 1.300L4.400.700V4.700H0zM5 .600L10 0V4.700H5zM0 5.300H4.400V9.300L0 8.700zM5 5.300H10V10L5 9.400z" fill="#fff"/></svg></span>
    <span class="search"><svg class="mag" viewBox="0 0 10 10"><circle cx="6" cy="4" r="3" fill="none" stroke="#333"/><path d="M3.800 6.200L1 9" stroke="#333"/></svg>Type here to search</span>
    <svg class="tb" viewBox="0 0 12 12"><circle cx="6" cy="6" r="4" fill="none" stroke="#fff" stroke-width="1.200"/></svg>
    <svg class="tb" viewBox="0 0 12 12"><path d="M2 2h3v8H2zM6 3h4v6H6z" fill="none" stroke="#d8e0e4"/></svg>
    <svg class="tb" viewBox="0 0 12 12"><circle cx="6" cy="6" r="5.500" fill="#2a8fd8"/><path d="M3 8c0-4 5-5 7-2-2-1-4 0-3 3-2 1-4 0-4-1z" fill="#60e0b0"/></svg>
    <svg class="tb" viewBox="0 0 12 12"><path d="M1 2h4l1 1.500h5V10H1z" fill="#f0c850"/><path d="M1 5h10v5H1z" fill="#e0a828"/></svg>
    <svg class="tb" viewBox="0 0 12 12"><path d="M1.500 3.500h9V11h-9z" fill="#f4f4f4"/><path d="M4 3.500a2 2.500 0 014 0" fill="none" stroke="#f4f4f4"/><path d="M3.500 5.500h2v2h-2z" fill="#e05030"/><path d="M6.500 5.500h2v2h-2z" fill="#70b030"/><path d="M3.500 8h2v2h-2z" fill="#2a90d8"/><path d="M6.500 8h2v2h-2z" fill="#e8b820"/></svg>
    <svg class="tb" viewBox="0 0 12 12"><path d="M.5 2.500h11v7.500H.5z" fill="#1e90d8"/><path d="M.5 2.500L6 7l5.500-4.500" fill="#a8dcf4"/></svg>
    <svg class="tb" viewBox="0 0 12 12"><circle cx="6" cy="6" r="5.500" fill="#d8382c"/><path d="M6 6L1 8.500A5.500 5.500 0 006 11.500z" fill="#38a048"/><path d="M6 6l5 2.500A5.500 5.500 0 016 11.500z" fill="#f0c020"/><circle cx="6" cy="6" r="2.400" fill="#3a7ce0" stroke="#fff" stroke-width=".8"/></svg>
    <svg class="tb" viewBox="0 0 12 12"><circle cx="6" cy="6" r="5.500" fill="#1ed760"/><path d="M3 4.300c2-.6 4-.4 6 .6M3.300 6c1.800-.4 3.500-.3 5.200.6M3.600 7.700c1.500-.3 3-.2 4.300.5" stroke="#10301c" fill="none" stroke-width=".9"/></svg>
    <svg class="tb" viewBox="0 0 12 12"><path d="M1 1h10v10H1z" fill="#f4f0e8"/><path d="M2 2h3v3H2z" fill="#d82828"/><path d="M6 2h3v3H6z" fill="#2848c8"/><path d="M2 6h3v3H2z" fill="#30a040"/><path d="M6 6h3v3H6z" fill="#d87820"/></svg>
    <span class="tb-active"><svg class="tb" viewBox="0 0 12 12"><path d="M1 1h10v10H1z" fill="#101828"/><path d="M2 2l8 8H6L2 5z" fill="#e87830"/><path d="M5 2h5v6z" fill="#30a0e0"/></svg></span>
    <span class="tray">
      <svg class="trayi" viewBox="0 0 10 10"><path d="M1.500 6.500L5 3l3.500 3.500" fill="none" stroke="#e4e8ea"/></svg>
      <svg class="trayi" viewBox="0 0 10 10"><path d="M3 2h4v6H3zM4.500 1h1M1.500 5h7" fill="none" stroke="#e4e8ea"/></svg>
      <svg class="trayi" viewBox="0 0 10 10"><path d="M1 2h8v5H1zM3 9h4" fill="none" stroke="#e4e8ea"/></svg>
      <svg class="trayi" viewBox="0 0 10 10"><path d="M1 4h2l2-2v6L3 6H1z" fill="#e4e8ea"/><path d="M6.500 3.500c1 1 1 2 0 3M8 2.500c1.500 1.500 1.500 3.500 0 5" fill="none" stroke="#e4e8ea" stroke-width=".7"/></svg>
      <span class="lang">ENG<br>IN</span>
      <span class="clock">12:14 PM<br>3/9/2021</span>
      <svg class="note" viewBox="0 0 12 12"><path d="M1 2h10v7H5.500L3 11V9H1z" fill="none" stroke="#eef0f2"/></svg>
    </span>
  </footer>
</div>
</body>
</html>
```
FILE: styles.css
```css
*{box-sizing:border-box}
html,body{margin:0;padding:0}
body{width:800px;height:450px;overflow:hidden;font-family:"Open Sans","Noto Sans",sans-serif;background:#32305f}
.sprites{position:absolute;width:0;height:0}
svg{display:block;overflow:hidden}
.app{display:flex;flex-direction:column;width:800px;height:450px}

.titlebar{display:flex;align-items:center;height:9px;background:#fff;padding-left:2px;flex:none}
.app-ico{display:inline-block;width:6px;height:6px;background:linear-gradient(135deg,#e07828 45%,#101828 45%,#2a90d8);flex:none}
.title{margin-left:2px;font-size:6.400px;color:#333;line-height:9px}
.winbtns{margin-left:auto;display:flex;align-items:center;color:#444}
.wb{width:19px;text-align:center;font-size:8px;line-height:9px}
.wb-max{display:block;width:5px;height:5px;border:1px solid #444;margin:0 7px}

.menubar{position:relative;display:flex;align-items:center;height:9px;background:#d0cfe8;flex:none;font-size:6.400px;color:#333}
.m-start{display:flex;align-items:center;gap:2px;width:21px;height:9px;padding-left:2px;background:#f5e9d2}
.m-start u,.m u{text-decoration:underline}
.m{line-height:9px}
.m-file{margin-left:7px}
.m-edit{margin-left:5px}
.m-view{margin-left:4px}
.m-ins{margin-left:4px}
.m-tools{margin-left:3px}
.m-win{margin-left:4px}
.m-help{margin-left:2px}
.docbtns{margin-left:auto;display:flex;gap:5px;padding-right:2px}
.docbtns i{display:block;width:4px;height:4px;background:#eeeef6;border:1px solid #8c8ca8}

.propbar{display:flex;align-items:center;height:14px;background:#d6d6e8;border-top:1px solid #eeeef6;padding-left:3px;flex:none;font-size:6.400px;color:#444}
.grip{display:block;width:2px;height:10px;background:#f4f4fa;border-right:1px solid #a8a8c0;flex:none}
.combo{position:relative;display:flex;align-items:center;height:9px;background:#fff;padding-left:1px;margin:1px 1.500px 0 0;line-height:9px}
.combo em{position:absolute;right:2px;top:2px;width:3px;height:3px;border-right:1px solid #777;border-bottom:1px solid #777;transform:rotate(45deg)}
.c-col{width:26px;margin-left:3px}
.swatch{display:block;width:16px;height:6px;background:#0a7a0a;border:1px solid #444}
.c-a{width:26.500px}
.c-b{width:17px}
.off{background:#d8d8e0;color:#a0a0aa}
.pi{width:10px;height:10px;margin-left:1.500px;flex:none}
.pi-first{margin-left:1px}

.workspace{display:flex;height:376px;flex:none;border-top:1px solid #9a9ab0}
.viewport{position:relative;flex:1;background:#32305f;overflow:hidden}
.part{position:absolute;left:0;top:0;width:785px;height:375px}
.tree{position:absolute;left:0;top:40px;margin:0;padding:0;list-style:none;width:120px;font-family:"Liberation Sans",sans-serif;font-size:7.200px;color:#c6c6de;letter-spacing:.05px}
.row{position:relative;display:flex;align-items:center;height:14.750px;white-space:nowrap}
.ti{width:11px;height:11px;flex:none;margin-right:2px}
.root{padding-left:2px}
.leaf,.node{padding-left:12px}
.row::before{content:"";position:absolute;left:3.500px;top:-1px;bottom:-1px;width:1px;background:#c8c8dc}
.row::after{content:"";position:absolute;left:4px;top:7px;width:8px;height:1px;background:#c8c8dc}
.root::before,.root::after{display:none}
.node::after{left:6px;width:6px}
.node{background:radial-gradient(circle at 4.500px 7.500px,#15152c 2.400px,transparent 2.800px)}
.wide .ti{margin-right:3px}
.sub::before{left:5px}
.sub::after{left:5px;width:7px}
.sub:last-child::before{bottom:7px}

.compass{position:absolute;left:726px;top:11px;width:30px;height:43px}

.ft{position:absolute;display:flex;flex-direction:column;background:#c5c5dc;box-shadow:1px 1px 2px rgba(8,8,30,.7);border-top:1px solid #2a2a50}
.fh{display:flex;align-items:center;justify-content:space-between;background:#fff;height:12px;flex:none;font-size:6px;color:#555;padding-left:3px;white-space:nowrap}
.fh i{display:block;width:8px;height:8px;margin-right:1px;background:radial-gradient(circle,#fff 0 1px,#d35560 1.300px)}
.fb{display:flex;flex-direction:column;align-items:center;gap:1.800px;padding-top:1px}
.fb-row{flex-direction:row;justify-content:space-around;padding:1px 1px 0}
.fi{width:10.500px;height:10.500px;flex:none}
.ft-a{left:735px;top:55px;width:14px;height:27px}
.ft-b{left:762px;top:55px;width:15px;height:26px}
.ft-c{left:710px;top:67px;width:15px;height:39px}
.ft-d{left:736px;top:105px;width:14px;height:133px}
.ft-e{left:758px;top:114px;width:15px;height:62px}
.ft-g{left:758px;top:209px;width:14px;height:64px}
.ft-h{left:758px;top:285px;width:15px;height:63px}
.ft-ref{left:685px;top:134px;width:37px;height:27px}
.ft-ref .fb-row{padding-top:3px}
.ft-dress{left:650px;top:252px;width:96px;height:28px}
.ft-d .fb{gap:2.300px}
.ft-h .fb{gap:1.500px}

.triad{position:absolute;left:758px;top:346px;width:24px;height:24px}
.activate{position:absolute;left:666px;top:360px;font-size:7.800px;color:#8e8eaa;white-space:nowrap}
.activate2{position:absolute;left:666px;top:368.500px;font-size:4.800px;line-height:6px;color:#6c6c90;white-space:nowrap}

.strip{display:flex;flex-direction:column;align-items:center;width:15px;flex:none;background:#d3d3ea;border-left:1px solid #f0f0f8}
.strip-grip{display:block;width:9px;height:2px;background:#f2f2fa;border-bottom:1px solid #a8a8c0;flex:none}
.g1{margin-top:1px}
.g2{margin-top:6px}
.g3{margin-top:4px}
.g4{margin-top:39px}
.si{width:10px;height:10px;margin-top:1.800px;flex:none}
.si-a{margin-top:2px}
.si-b{margin-top:4px}
.si-c{margin-top:3px}
.dots{display:block;width:2px;height:2px;margin:8px 0 0 -5px;background:#2848a0;box-shadow:5px 3px 0 #222;flex:none}

.mainbar{display:flex;align-items:center;height:15px;flex:none;background:#d8d8ea;border-top:1px solid #f2f2fa;padding-left:3px;position:relative}
.mainbar .grip{margin-right:2px}
.bi{width:11.600px;height:10px;flex:none}
.sep{display:block;width:8.400px;height:10px;position:relative;flex:none}
.sep::after{content:"";position:absolute;left:3px;top:0;width:2px;height:10px;background:#f4f4fa;border-right:1px solid #b0b0c6}
.s2{width:8px}
.s3{width:8.400px}
.s4{width:10px}
.s5{width:8.400px}
.fx{width:11.600px;font-family:"Liberation Serif",serif;font-size:10px;font-weight:700;color:#222;line-height:10px;flex:none;font-style:italic;white-space:nowrap}
.fx small{font-size:6px}
.bodycombo{position:relative;width:68px;height:10px;background:#fff;margin-left:1px;font-size:5.600px;line-height:10px;color:#555;padding-left:2px;flex:none}
.bodycombo em{position:absolute;right:3px;top:3px;width:3px;height:3px;border-right:1px solid #888;border-bottom:1px solid #888;transform:rotate(45deg)}
.catia{position:absolute;right:3px;top:1px;width:22px;height:13px;display:flex;flex-direction:column;align-items:center}
.catlogo{width:22px;height:10px;flex:none}
.catia b{font-size:4.500px;line-height:4px;color:#2840a8;font-style:italic;margin-top:-2px}

.statusbar{display:flex;align-items:center;height:10px;flex:none;background:#dbdbeb;border-top:1px solid #b4b4c8;font-size:5.800px;color:#444;padding-left:1px}
.msg{width:646px;white-space:nowrap}
.cmd{display:block;width:125px;height:8px;background:#fff}
.stbtn{display:block;width:10px;height:8px;background:#d2d2dc;border:1px solid #aaa;margin-left:2px}

.taskbar{display:flex;align-items:center;height:17px;flex:none;background:#1d3942;position:relative}
.start{display:flex;align-items:center;justify-content:center;width:20px;height:100%;flex:none}
.winlogo{width:7px;height:7px}
.search{display:flex;align-items:center;width:143px;height:100%;background:#f4f4f4;padding-left:6px;font-size:7.400px;color:#333;flex:none}
.mag{width:7px;height:7px;margin-right:4px;flex:none}
.tb{width:11px;height:11px;margin:0 4.750px;flex:none}
.tb-active{display:flex;align-items:center;justify-content:center;width:20px;height:100%;background:#3e5760;flex:none;margin-left:-.500px}
.tray{position:absolute;right:0;top:0;height:100%;display:flex;align-items:center;color:#e8ecee;font-size:5.200px;line-height:7px}
.trayi{width:8px;height:8px;margin-right:2.200px;flex:none}
.lang{width:15px;text-align:center;margin-left:1px;flex:none}
.clock{width:28px;text-align:center;margin-left:1px;flex:none}
.note{width:9px;height:9px;margin:0 9px 0 3px;flex:none}
```
